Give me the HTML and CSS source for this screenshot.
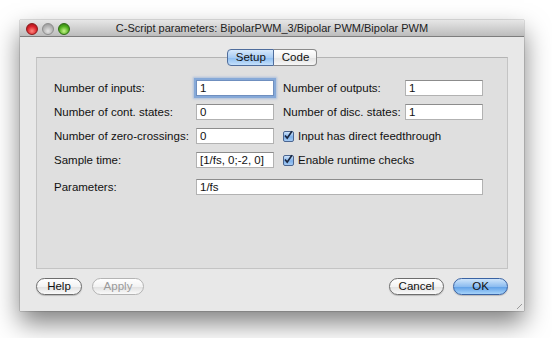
FILE: index.html
```html
<!DOCTYPE html>
<html lang="en">
<head>
    <meta charset="UTF-8">
    <title>C-Script parameters</title>
    <link rel="stylesheet" href="styles.css">
</head>
<body>
    <div class="window">
        <!-- title bar -->
        <div class="titlebar">
            <div class="lights">
                <span class="light red"></span>
                <span class="light gray"></span>
                <span class="light green"></span>
            </div>
            <div class="title">C-Script parameters: BipolarPWM_3/Bipolar PWM/Bipolar PWM</div>
        </div>

        <div class="content">
            <div class="tabbox">
                <div class="tabs">
                    <span class="tab active">Setup</span>
                    <span class="tab">Code</span>
                </div>

                <div class="form">
                    <label>Number of inputs:</label>
                    <div class="cell"><div class="field focus">1</div></div>
                    <label>Number of outputs:</label>
                    <div class="field">1</div>

                    <label>Number of cont. states:</label>
                    <div class="cell"><div class="field">0</div></div>
                    <label>Number of disc. states:</label>
                    <div class="field">1</div>

                    <label>Number of zero-crossings:</label>
                    <div class="cell"><div class="field">0</div></div>
                    <div class="check"><span class="box"><svg width="11" height="11" viewBox="0 0 11 11"><path d="M2.2 5.6 L4.6 8.4 L9.8 0.8" fill="none" stroke="#1a2740" stroke-width="1.8"/></svg></span>Input has direct feedthrough</div>

                    <label>Sample time:</label>
                    <div class="cell"><div class="field">[1/fs, 0;-2, 0]</div></div>
                    <div class="check"><span class="box"><svg width="11" height="11" viewBox="0 0 11 11"><path d="M2.2 5.6 L4.6 8.4 L9.8 0.8" fill="none" stroke="#1a2740" stroke-width="1.8"/></svg></span>Enable runtime checks</div>

                    <label class="params">Parameters:</label>
                    <div class="field wide params">1/fs</div>
                </div>
            </div>

            <div class="buttons">
                <button class="btn">Help</button>
                <button class="btn disabled">Apply</button>
                <span class="spacer"></span>
                <button class="btn cancel">Cancel</button>
                <button class="btn ok">OK</button>
            </div>
        </div>
        <div class="grip"></div>
    </div>
</body>
</html>
```

FILE: styles.css
```css
html, body {
    height: 100%;
}

body {
    margin: 0;
    background: #fff;
    font-family: "Liberation Sans", Arial, sans-serif;
    font-size: 11.5px;
    color: #111;
    padding: 20px 0 0 20px;
    box-sizing: border-box;
}

.window {
    width: 504px;
    height: 291px;
    background: #e8e8e8;
    box-shadow: 0 12px 24px rgba(0, 0, 0, 0.5), 0 0 1px rgba(0, 0, 0, 0.7);
    position: relative;
    display: flex;
    flex-direction: column;
}

.titlebar {
    height: 16px;
    background: linear-gradient(#e6e6e6, #bcbcbc);
    border-bottom: 1px solid #7d7d7d;
    border-radius: 4px 4px 0 0;
    position: relative;
}

/* traffic lights sit over the title bar */
.lights {
    position: absolute;
    left: 6px;
    top: 3px;
    display: flex;
    gap: 4px;
}

.light {
    width: 12px;
    height: 12px;
    border-radius: 50%;
    box-sizing: border-box;
}

.red {
    background: radial-gradient(circle at 50% 70%, #ff8a80, #d9212a 55%, #8e1218);
    border: 1px solid #8a1a1a;
}

.gray {
    background: radial-gradient(circle at 50% 70%, #e4e4e4, #b4b4b4 55%, #8d8d8d);
    border: 1px solid #8d8d8d;
}

.green {
    background: radial-gradient(circle at 50% 70%, #c8f58c, #4fae1d 55%, #2c6d10);
    border: 1px solid #2f6a15;
}

.title {
    text-align: center;
    font-size: 11px;
    line-height: 17px;
    color: #222;
    white-space: nowrap;
}

.content {
    flex: 1;
    padding: 20px 16px 15px 16px;
    display: flex;
    flex-direction: column;
}

.tabbox {
    height: 210px;
    background: #dfdfdf;
    border: 1px solid #c4c4c4;
    border-top-color: #b4b4b4;
    position: relative;
}

.tabs {
    position: absolute;
    top: -9px;
    left: 0;
    right: 0;
    display: flex;
    justify-content: center;
}

.tab {
    height: 15px;
    line-height: 15px;
    padding: 0 7px 0 8px;
    font-size: 11.5px;
    background: linear-gradient(#ffffff, #f0f0f0 50%, #e2e2e2 51%, #f6f6f6);
    border: 1px solid #8a8a8a;
    border-left: none;
    border-radius: 0 4px 4px 0;
    color: #111;
}

.tab.active {
    background: linear-gradient(#d6e8fb, #a9cdf4 50%, #8bbcf0 51%, #c4e0fb);
    border: 1px solid #4f6d9c;
    border-radius: 4px 0 0 4px;
    padding: 0 7px 0 8px;
}

.form {
    display: grid;
    grid-template-columns: 142px 87px 122px 78px;
    grid-auto-rows: 16px;
    row-gap: 8px;
    padding: 22px 0 0 17px;
    align-items: center;
}

.form label {
    white-space: nowrap;
}

.field {
    height: 16px;
    box-sizing: border-box;
    background: #fff;
    border: 1px solid #b2b2b2;
    border-top-color: #8c8c8c;
    padding-left: 3px;
    line-height: 14px;
    white-space: nowrap;
}

.cell .field {
    width: 78px;
}

.field.focus {
    box-shadow: 0 0 0 2px #86a9d8, 0 0 2px 3px rgba(120, 160, 215, 0.5);
    border-color: #6f8fbf;
}

.field.wide {
    grid-column: 2 / 5;
    width: 287px;
}

.params {
    margin-top: 5px;
}

.check {
    grid-column: 3 / 5;
    display: flex;
    align-items: center;
    gap: 4px;
    white-space: nowrap;
}

.box {
    width: 11px;
    height: 11px;
    box-sizing: border-box;
    border: 1px solid #4a6590;
    border-radius: 2px;
    background: linear-gradient(#cfe3f9, #7eb0ea 55%, #a5cbf4);
    display: flex;
}

.box svg {
    margin: -2px 0 0 -1px;
}

.buttons {
    display: flex;
    gap: 10px;
    margin-top: 9px;
}

.spacer {
    flex: 1;
}

.btn {
    height: 17px;
    box-sizing: border-box;
    border: 1px solid #6d6d6d;
    border-radius: 9px;
    background: linear-gradient(#ffffff, #f3f3f3 50%, #e0e0e0 51%, #fafafa);
    font-family: "Liberation Sans", Arial, sans-serif;
    font-size: 11.5px;
    color: #111;
    padding: 0;
    width: 46px;
    line-height: 15px;
    box-shadow: 0 1px 1px rgba(0, 0, 0, 0.2);
}

.btn.disabled {
    width: 52px;
    color: #9a9a9a;
    border-color: #b4b4b4;
    box-shadow: none;
}

.btn.cancel {
    width: 55px;
    margin-right: -1px;
}

.btn.ok {
    width: 55px;
    border-color: #3a63a3;
    background: linear-gradient(#cfe5fb, #8dbdf0 50%, #5d9ee6 51%, #a6d3fa);
}

.grip {
    position: absolute;
    right: 2px;
    bottom: 2px;
    width: 10px;
    height: 10px;
    background: repeating-linear-gradient(135deg, transparent 0 2px, #9a9a9a 2px 3px, transparent 3px 4px);
    clip-path: polygon(100% 0, 100% 100%, 0 100%);
}
```
